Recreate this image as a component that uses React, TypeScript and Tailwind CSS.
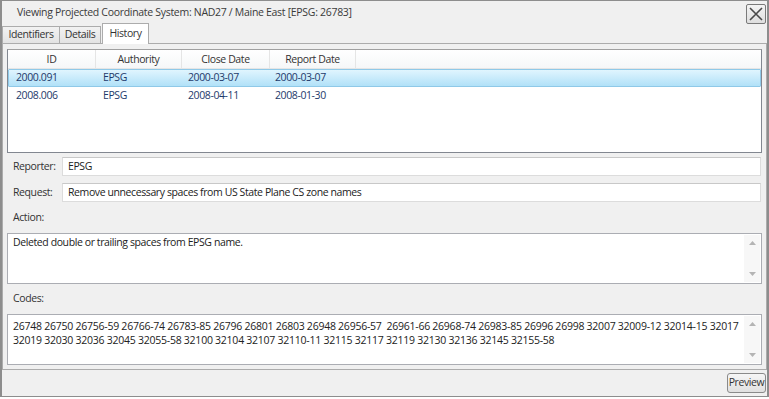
import { ReactNode } from "react";

const rows = [
  { id: "2000.091", auth: "EPSG", close: "2000-03-07", report: "2000-03-07", selected: true },
  { id: "2008.006", auth: "EPSG", close: "2008-04-11", report: "2008-01-30", selected: false },
];

const codes =
  "26748 26750 26756-59 26766-74 26783-85 26796 26801 26803 26948 26956-57  26961-66 26968-74 26983-85 26996 26998 32007 32009-12 32014-15 32017 32019 32030 32036 32045 32055-58 32100 32104 32107 32110-11 32115 32117 32119 32130 32136 32145 32155-58";

const ScrollBar = () => (
  <div className="w-[16px] bg-[#f7f7f7] flex flex-col justify-between items-center py-[6px]">
    <svg width="7" height="4" viewBox="0 0 7 4">
      <path d="M0 4 L3.5 0 L7 4 Z" fill="#b4b4b4" />
    </svg>
    <svg width="7" height="4" viewBox="0 0 7 4">
      <path d="M0 0 L3.5 4 L7 0 Z" fill="#b4b4b4" />
    </svg>
  </div>
);

const TextArea = ({ children }: { children: ReactNode }) => (
  <div className="mx-[4px] h-[51px] border border-[#abadb3] bg-white flex">
    <div className="flex-1 pl-[5px] pt-[2px] leading-[13.5px] text-[#222]">{children}</div>
    <div className="flex py-[1px] pr-[1px]">
      <ScrollBar />
    </div>
  </div>
);

const Field = ({ label, value }: { label: string; value: string }) => (
  <div className="flex items-center h-[19px] ml-[10px] mr-[5px]">
    <div className="w-[49px] text-[#333]">{label}</div>
    <div className="flex-1 h-[19px] border border-[#dcdcdc] border-t-[#c8c8c8] bg-white px-[5px] flex items-center text-[#222]">
      {value}
    </div>
  </div>
);

export default function App() {
  return (
    <div
      className="w-[769px] h-[399px] bg-white overflow-hidden text-[10.5px] tracking-[-0.4px]"
      style={{ fontFamily: '"Open Sans", "Noto Sans", sans-serif' }}
    >
      <div className="h-[397px] bg-[#f0f0f0] border-t border-l-2 border-r-2 border-b border-[#8d8d8d] flex flex-col">
        {/* title */}
        <div className="h-[22px] flex items-center justify-between pl-[15px] pr-[1px]">
          <span className="text-[#3a3a3a] pt-[2px] tracking-[-0.3px]">
            Viewing Projected Coordinate System: NAD27 / Maine East [EPSG: 26783]
          </span>
          <div className="w-[20px] h-[20px] mt-[4px] border border-[#7a7a7a] rounded-[2px] bg-gradient-to-b from-[#f4f4f4] to-[#dedede] flex items-center justify-center">
            <svg width="16" height="16" viewBox="0 0 16 16">
              <path d="M2 2 L14 14 M14 2 L2 14" stroke="#4a4a4a" strokeWidth="1.6" />
            </svg>
          </div>
        </div>

        {/* tabs */}
        <div className="h-[20px] flex items-end relative z-10">
          <div className="h-[17px] w-[58px] border border-b-0 border-[#acacac] bg-gradient-to-b from-[#f2f2f2] to-[#e3e3e3] flex items-center justify-center text-[#333]">
            Identifiers
          </div>
          <div className="h-[17px] w-[41px] border border-l-0 border-b-0 border-[#acacac] bg-gradient-to-b from-[#f2f2f2] to-[#e3e3e3] flex items-center justify-center text-[#333]">
            Details
          </div>
          <div className="h-[21px] w-[47px] -mb-[1px] ml-[1px] border border-b-0 border-[#acacac] bg-white flex items-start justify-center pt-[2px] text-[#333]">
            History
          </div>
        </div>

        {/* tab panel */}
        <div className="h-[327px] border border-[#acacac] flex flex-col">
          {/* list */}
          <div className="mt-[5px] mx-[4px] h-[104px] border border-[#828790] border-t-[#a0a0a0] bg-white flex flex-col">
            <div className="h-[19px] flex text-[#333] bg-gradient-to-b from-white to-[#f6f7f8] border-b border-[#e5e5e5]">
              <div className="w-[88px] text-center border-r border-[#e5e5e5] leading-[18px]">ID</div>
              <div className="w-[86px] text-center border-r border-[#e5e5e5] leading-[18px]">Authority</div>
              <div className="w-[88px] text-center border-r border-[#e5e5e5] leading-[18px]">Close Date</div>
              <div className="w-[86px] text-center border-r border-[#e5e5e5] leading-[18px]">Report Date</div>
            </div>
            {rows.map((r) => (
              <div
                key={r.id}
                className={
                  r.selected
                    ? "h-[18px] flex items-center text-[#1e3a6a] border border-[#8fc9e8] bg-gradient-to-b from-[#e0f5fe] to-[#b1e1f8] rounded-[1px]"
                    : "h-[17px] flex items-center text-[#1e3a6a] border border-transparent"
                }
              >
                <div className="w-[88px] pl-[7px]">{r.id}</div>
                <div className="w-[86px] pl-[6px]">{r.auth}</div>
                <div className="w-[88px] pl-[5px]">{r.close}</div>
                <div className="w-[86px] pl-[4px]">{r.report}</div>
              </div>
            ))}
          </div>

          <div className="mt-[4px] flex flex-col gap-[7px]">
            <Field label="Reporter:" value="EPSG" />
            <Field label="Request:" value="Remove unnecessary spaces from US State Plane CS zone names" />
          </div>

          <div className="h-[31px] ml-[10px] flex items-center text-[#333]">Action:</div>
          <TextArea>Deleted double or trailing spaces from EPSG name.</TextArea>

          <div className="h-[30px] ml-[10px] flex items-center text-[#333]">Codes:</div>
          <TextArea>
            <div className="pt-[3px] tracking-[-0.25px] whitespace-pre-wrap">{codes}</div>
          </TextArea>
        </div>

        {/* footer */}
        <div className="flex-1 flex justify-end items-center pr-[1px]">
          <div className="h-[20px] w-[39px] border border-[#8a8a8a] rounded-[3px] bg-gradient-to-b from-[#f6f6f6] to-[#e0e0e0] flex items-center justify-center text-[#333]">
            Preview
          </div>
        </div>
      </div>
    </div>
  );
}
